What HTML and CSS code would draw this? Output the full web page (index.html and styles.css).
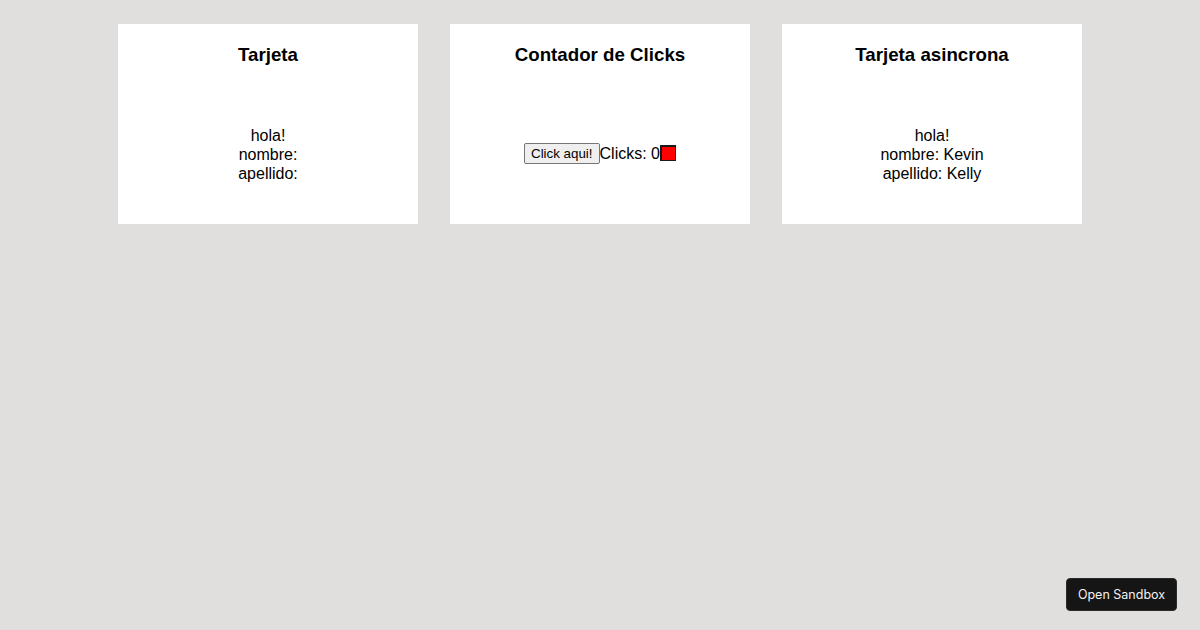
FILE: index.html
```html
<!DOCTYPE html>
<html lang="es">
<head>
    <meta charset="UTF-8">
    <meta name="viewport" content="width=device-width, initial-scale=1.0">
    <title>Tarjetas</title>
    <link rel="stylesheet" href="styles.css">
</head>
<body>
<div class="cards">
    <div class="card">
        <h3>Tarjeta</h3>
        <div class="card-body">
            <div>hola!</div>
            <div>nombre: </div>
            <div>apellido: </div>
        </div>
    </div>

    <div class="card">
        <h3>Contador de Clicks</h3>
        <div class="card-body">
            <div class="counter">
                <button class="click-btn">Click aqui!</button>
                <span>Clicks: 0</span>
                <span class="box"></span>
            </div>
        </div>
    </div>

    <div class="card">
        <h3>Tarjeta asincrona</h3>
        <div class="card-body">
            <div>hola!</div>
            <div>nombre: Kevin</div>
            <div>apellido: Kelly</div>
        </div>
    </div>
</div>

<a class="sandbox-btn" href="#">Open Sandbox</a>
</body>
</html>
```

FILE: styles.css
```css
body {
    margin: 0;
    background-color: #e0dfdd;
    font-family: "Liberation Sans", Arial, sans-serif;
    color: #000;
}

.cards {
    display: flex;
    justify-content: center;
    gap: 32px;
    padding-top: 24px;
}

.card {
    width: 300px;
    height: 200px;
    background-color: white;
    display: flex;
    flex-direction: column;
    text-align: center;
}

.card h3 {
    font-size: 18.72px;
    margin: 20px 0 18px;
    line-height: 22px;
}

.card-body {
    flex: 1;
    display: flex;
    flex-direction: column;
    justify-content: center;
    font-size: 16px;
    line-height: 19px;
}

.counter {
    display: flex;
    justify-content: center;
    align-items: center;
    margin-bottom: 2px;
}

.click-btn {
    font-family: "Liberation Sans", Arial, sans-serif;
    font-size: 13.33px;
    padding: 1px 6px;
    height: 21px;
    background-color: #efefef;
    border: 1px solid #767676;
    border-radius: 2px;
    color: #000;
}

.box {
    width: 13px;
    height: 13px;
    background-color: red;
    border: solid #1a1a1a;
    border-width: 2px 1px 1px 2px;
}

.sandbox-btn {
    position: fixed;
    right: 23px;
    bottom: 19px;
    width: 111px;
    height: 33px;
    box-sizing: border-box;
    display: flex;
    align-items: center;
    justify-content: center;
    background-color: #151515;
    color: #f2f2f2;
    font-family: Inter, "Liberation Sans", sans-serif;
    font-size: 12.5px;
    text-decoration: none;
    border-radius: 4px;
    border: 1px solid #2a2a2a;
}
```
